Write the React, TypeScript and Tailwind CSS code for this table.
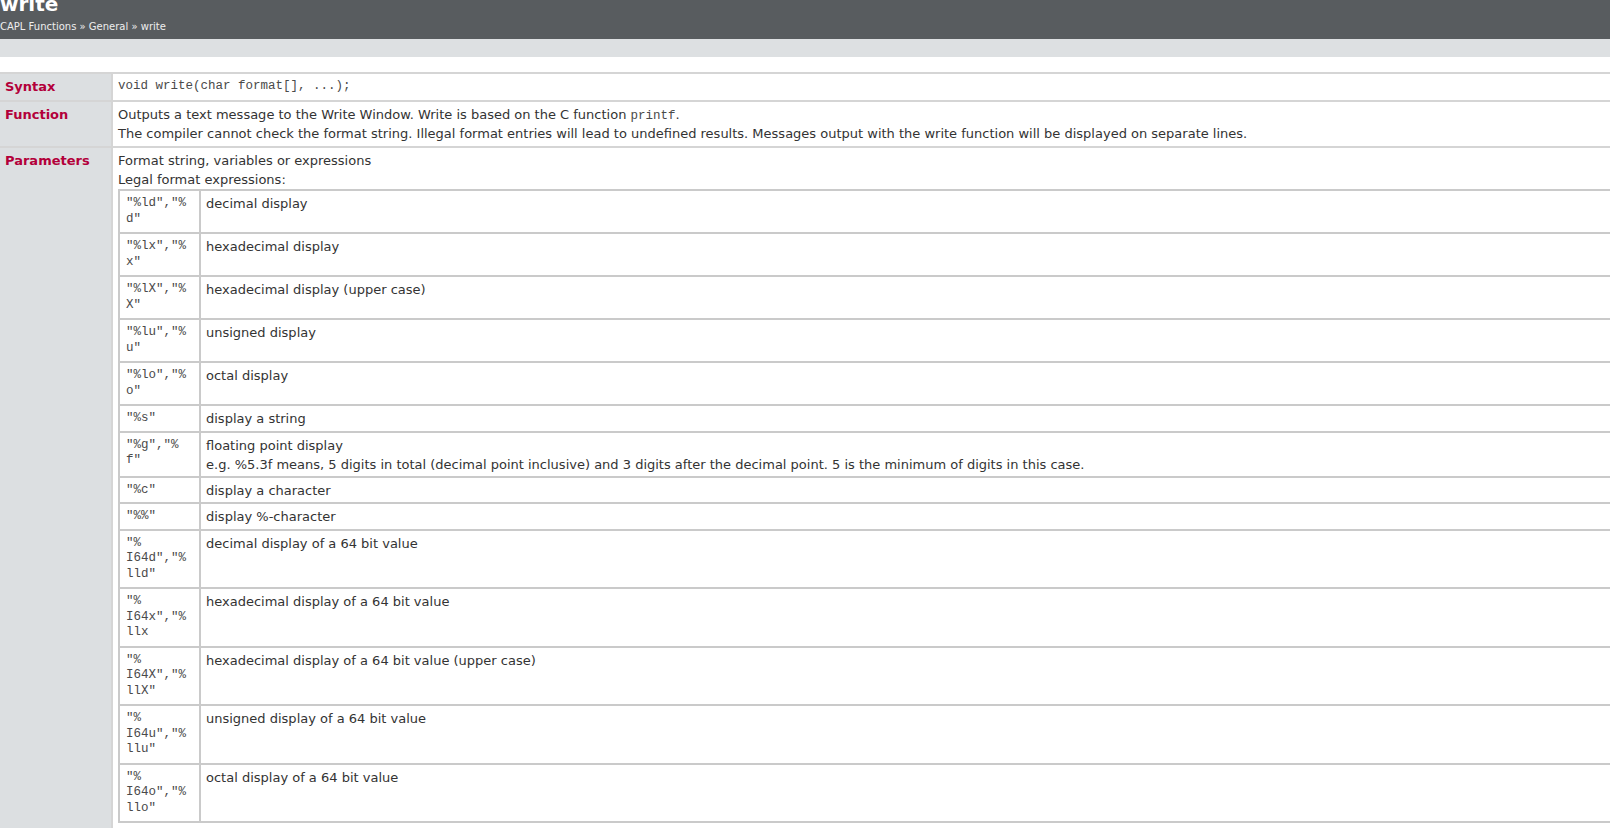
// CAPL reference page for write(): dark title bar, breadcrumb, then the Syntax / Function / Parameters
// table with the nested table of legal format expressions.

const sans = "font-['DejaVu_Sans',sans-serif]";
const mono = "font-['Liberation_Mono','Courier_New',monospace]";

type FormatRow = { code: string[]; text: string[] };

const formats: FormatRow[] = [
  { code: ['"%ld","%', 'd"'], text: ["decimal display"] },
  { code: ['"%lx","%', 'x"'], text: ["hexadecimal display"] },
  { code: ['"%lX","%', 'X"'], text: ["hexadecimal display (upper case)"] },
  { code: ['"%lu","%', 'u"'], text: ["unsigned display"] },
  { code: ['"%lo","%', 'o"'], text: ["octal display"] },
  { code: ['"%s"'], text: ["display a string"] },
  {
    code: ['"%g","%', 'f"'],
    text: [
      "floating point display",
      "e.g. %5.3f means, 5 digits in total (decimal point inclusive) and 3 digits after the decimal point. 5 is the minimum of digits in this case.",
    ],
  },
  { code: ['"%c"'], text: ["display a character"] },
  { code: ['"%%"'], text: ["display %-character"] },
  { code: ['"%', 'I64d","%', 'lld"'], text: ["decimal display of a 64 bit value"] },
  { code: ['"%', 'I64x","%', "llx"], text: ["hexadecimal display of a 64 bit value"] },
  { code: ['"%', 'I64X","%', 'llX"'], text: ["hexadecimal display of a 64 bit value (upper case)"] },
  { code: ['"%', 'I64u","%', 'llu"'], text: ["unsigned display of a 64 bit value"] },
  { code: ['"%', 'I64o","%', 'llo"'], text: ["octal display of a 64 bit value"] },
];

function Label({ children }: { children: React.ReactNode }) {
  return (
    <td className="w-[112px] border-r-2 border-[#d5d5d5] bg-[#dcdfe1] px-[5px] pt-[3px] pb-[3px] align-top text-[13px] font-bold leading-[19px] text-[#b3003a]">
      {children}
    </td>
  );
}

function FormatTable() {
  return (
    <table className="mt-0 w-[calc(100%+20px)] border-collapse border-b-2 border-l-2 border-[#cacaca]">
      <tbody>
        {formats.map((f, i) => (
          <tr key={i} className="border-t-2 border-[#cacaca]">
            <td
              className={`w-[81px] border-r-2 border-[#cacaca] px-[6px] pt-[5px] align-top text-[12.5px] leading-[15.5px] text-[#4a4a4a] whitespace-nowrap ${mono} ${
                f.code.length > 1 ? "pb-[5px]" : "pb-[4px]"
              }`}
            >
              {f.code.map((line, j) => (
                <div key={j}>{line}</div>
              ))}
            </td>
            <td className="px-[5px] pt-[3px] pb-[2px] align-top">
              {f.text.map((line, j) => (
                <div key={j}>{line}</div>
              ))}
            </td>
          </tr>
        ))}
      </tbody>
    </table>
  );
}

export default function App() {
  return (
    <div className={`min-h-screen w-full overflow-hidden bg-white text-[13px] leading-[19px] text-[#333] ${sans}`}>
      <header className="h-[39px] overflow-hidden bg-[#585c5f] text-white">
        <h1 className="-mt-[11px] text-[20px] font-bold leading-[30px]">write</h1>
        <div className="mt-[1px] text-[10px] leading-[14px] text-[#eeeeee]">CAPL Functions » General » write</div>
      </header>
      <div className="h-[18px] bg-[#dde0e2]" />
      <div className="h-[15px]" />

      <table className="w-full border-collapse">
        <tbody>
          <tr className="border-t-2 border-[#d5d5d5]">
            <Label>Syntax</Label>
            <td className={`px-[5px] pt-[3px] pb-[4px] align-top text-[12.5px] leading-[19px] text-[#4a4a4a] ${mono}`}>
              void write(char format[], ...);
            </td>
          </tr>
          <tr className="border-t-2 border-[#d5d5d5]">
            <Label>Function</Label>
            <td className="px-[5px] pt-[3px] pb-[3px] align-top">
              <div className="h-[19px]">
                Outputs a text message to the Write Window. Write is based on the C function{" "}
                <span className={`text-[12.5px] leading-[0] text-[#4a4a4a] ${mono}`}>printf</span>.
              </div>
              <div>
                The compiler cannot check the format string. Illegal format entries will lead to undefined results.
                Messages output with the write function will be displayed on separate lines.
              </div>
            </td>
          </tr>
          <tr className="border-t-2 border-[#d5d5d5]">
            <Label>Parameters</Label>
            <td className="px-[5px] pt-[3px] pb-[20px] align-top">
              <div>Format string, variables or expressions</div>
              <div>Legal format expressions:</div>
              <FormatTable />
            </td>
          </tr>
        </tbody>
      </table>
    </div>
  );
}
